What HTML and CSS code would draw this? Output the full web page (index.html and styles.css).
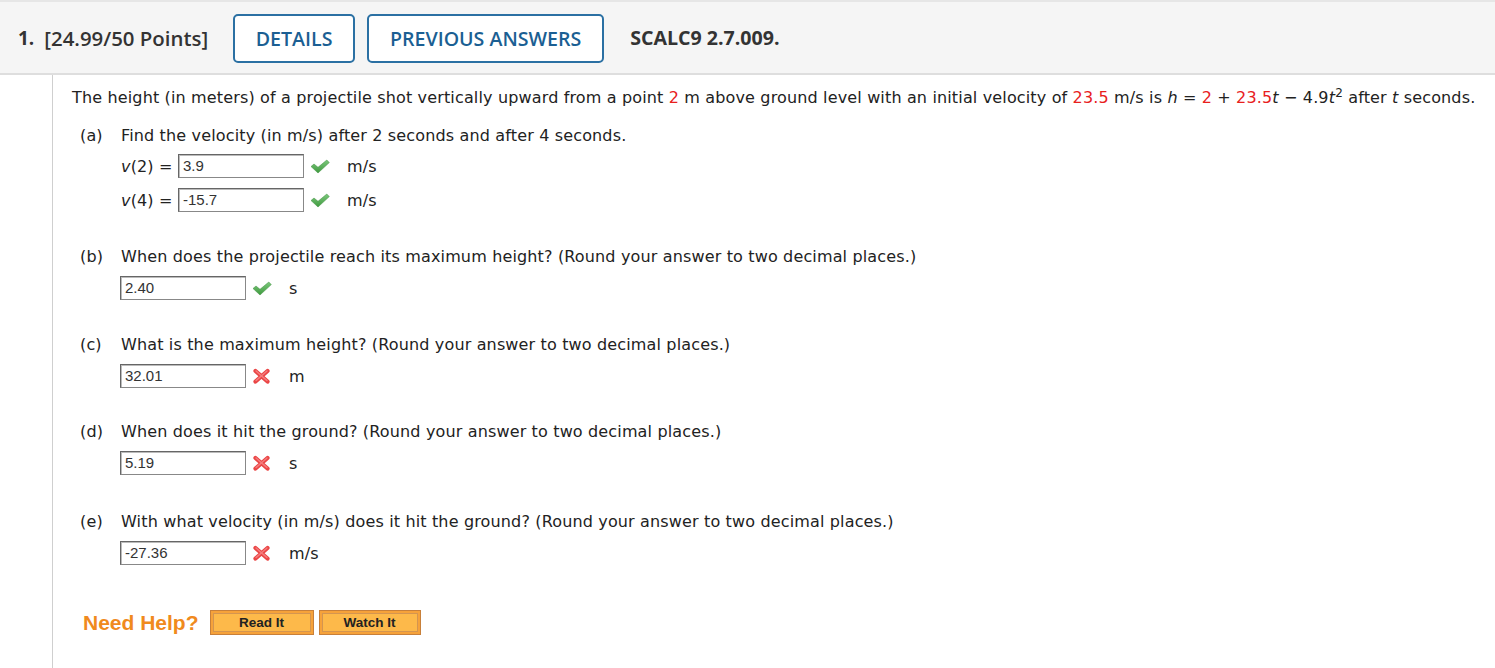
FILE: index.html
```html
<!DOCTYPE html>
<html>
<head>
<meta charset="utf-8">
<link rel="stylesheet" href="styles.css">
</head>
<body>
<div class="header">
  <span class="qnum">1.</span>
  <span class="points">[24.99/50 Points]</span>
  <button class="hbtn btn-details">DETAILS</button>
  <button class="hbtn btn-prev">PREVIOUS ANSWERS</button>
  <span class="code">SCALC9 2.7.009.</span>
</div>
<div class="content">
  <p class="intro">The height (in meters) of a projectile shot vertically upward from a point <span class="red">2</span> m above ground level with an initial velocity of <span class="red">23.5</span> m/s is <i>h</i> = <span class="red">2</span> + <span class="red">23.5</span><i>t</i> &minus; 4.9<i>t</i><sup>2</sup> after <i>t</i> seconds.</p>

  <div class="part part-a">
    <div class="qline"><span class="lbl">(a)</span><span>Find the velocity (in m/s) after 2 seconds and after 4 seconds.</span></div>
    <div class="arow first"><span class="vlbl"><i>v</i>(2) =</span><span class="ans">3.9</span><span class="icon"><svg viewBox="0 0 20 16" width="20" height="16"><defs><linearGradient id="g1" x1="0" y1="0" x2="0" y2="1"><stop offset="0" stop-color="#7cc87c"/><stop offset="1" stop-color="#3f9a3f"/></linearGradient></defs><path d="M1 8.5 L4 6 L8 9.3 L16.8 2 L19.3 4.6 L8 15 Z" fill="url(#g1)" stroke="#3f8f3f" stroke-width="0.5" stroke-linejoin="round"/></svg></span><span class="unit">m/s</span></div>
    <div class="arow"><span class="vlbl"><i>v</i>(4) =</span><span class="ans">-15.7</span><span class="icon"><svg viewBox="0 0 20 16" width="20" height="16"><path d="M1 8.5 L4 6 L8 9.3 L16.8 2 L19.3 4.6 L8 15 Z" fill="url(#g1)" stroke="#3f8f3f" stroke-width="0.5" stroke-linejoin="round"/></svg></span><span class="unit">m/s</span></div>
  </div>

  <div class="part part-b">
    <div class="qline"><span class="lbl">(b)</span><span>When does the projectile reach its maximum height? (Round your answer to two decimal places.)</span></div>
    <div class="arow first ind"><span class="ans">2.40</span><span class="icon"><svg viewBox="0 0 20 16" width="20" height="16"><path d="M1 8.5 L4 6 L8 9.3 L16.8 2 L19.3 4.6 L8 15 Z" fill="url(#g1)" stroke="#3f8f3f" stroke-width="0.5" stroke-linejoin="round"/></svg></span><span class="unit">s</span></div>
  </div>

  <div class="part part-c">
    <div class="qline"><span class="lbl">(c)</span><span>What is the maximum height? (Round your answer to two decimal places.)</span></div>
    <div class="arow first ind"><span class="ans">32.01</span><span class="icon"><svg viewBox="0 0 20 16" width="20" height="16"><g stroke="#ea4545" stroke-width="4.2" stroke-linecap="round"><line x1="3.5" y1="3" x2="15.5" y2="13.5"/><line x1="15.5" y1="3" x2="3.5" y2="13.5"/></g><g stroke="#f57c7c" stroke-width="1.4" stroke-linecap="round"><line x1="4" y1="3" x2="15" y2="12.6"/><line x1="15" y1="3" x2="4" y2="12.6"/></g></svg></span><span class="unit">m</span></div>
  </div>

  <div class="part">
    <div class="qline"><span class="lbl">(d)</span><span>When does it hit the ground? (Round your answer to two decimal places.)</span></div>
    <div class="arow first ind"><span class="ans">5.19</span><span class="icon"><svg viewBox="0 0 20 16" width="20" height="16"><g stroke="#ea4545" stroke-width="4.2" stroke-linecap="round"><line x1="3.5" y1="3" x2="15.5" y2="13.5"/><line x1="15.5" y1="3" x2="3.5" y2="13.5"/></g><g stroke="#f57c7c" stroke-width="1.4" stroke-linecap="round"><line x1="4" y1="3" x2="15" y2="12.6"/><line x1="15" y1="3" x2="4" y2="12.6"/></g></svg></span><span class="unit">s</span></div>
  </div>

  <div class="part part-e">
    <div class="qline"><span class="lbl">(e)</span><span>With what velocity (in m/s) does it hit the ground? (Round your answer to two decimal places.)</span></div>
    <div class="arow first ind"><span class="ans">-27.36</span><span class="icon"><svg viewBox="0 0 20 16" width="20" height="16"><g stroke="#ea4545" stroke-width="4.2" stroke-linecap="round"><line x1="3.5" y1="3" x2="15.5" y2="13.5"/><line x1="15.5" y1="3" x2="3.5" y2="13.5"/></g><g stroke="#f57c7c" stroke-width="1.4" stroke-linecap="round"><line x1="4" y1="3" x2="15" y2="12.6"/><line x1="15" y1="3" x2="4" y2="12.6"/></g></svg></span><span class="unit">m/s</span></div>
  </div>

  <div class="help">
    <span class="need">Need Help?</span>
    <span class="obtn read">Read It</span>
    <span class="obtn watch">Watch It</span>
  </div>
</div>
</body>
</html>
```
FILE: styles.css
```css
html, body {
  margin: 0;
  padding: 0;
  background: #fff;
}
body {
  font-family: "DejaVu Sans", Verdana, sans-serif;
  color: #222;
  height: 668px;
  overflow: hidden;
}
.header {
  display: flex;
  align-items: center;
  height: 71px;
  border-top: 2px solid #e6e6e6;
  border-bottom: 2px solid #dedede;
  background: #f5f5f5;
  padding-left: 18px;
  font-family: "Open Sans", sans-serif;
  color: #333;
}
.qnum {
  font-weight: 700;
  font-size: 19px;
  margin-right: 10px;
}
.points {
  font-weight: 600;
  font-size: 20.4px;
  margin-right: 25px;
}
.hbtn {
  font-family: "Open Sans", sans-serif;
  font-weight: 600;
  font-size: 19.6px;
  color: #1b5f93;
  background: #fff;
  border: 2px solid #2b70a3;
  border-radius: 5px;
  height: 49px;
  padding: 0;
  margin: 2px 12px 0 0;
}
.btn-details { width: 122px; }
.btn-prev { width: 237px; }
.code {
  margin-left: 14px;
  font-weight: 700;
  font-size: 19.6px;
  color: #333;
}
.content {
  margin-left: 52px;
  border-left: 1px solid #cfcfcf;
  padding: 12px 0 0 19px;
  font-size: 16px;
  letter-spacing: 0.15px;
  height: 600px;
}
.intro {
  margin: 0;
  line-height: 22px;
}
.intro sup {
  font-size: 12px;
  line-height: 0;
}
.red { color: #e8201d; }
.part { margin-top: 28px; }
.part-a { margin-top: 16px; }
.part-b, .part-c { margin-top: 29px; }
.part-e { margin-top: 31px; }
.qline {
  display: flex;
  line-height: 22px;
  padding-left: 8px;
}
.lbl { width: 41px; }
.arow {
  display: flex;
  align-items: center;
  height: 34px;
  padding-left: 49px;
}
.arow.first { margin-top: 3px; }
.part-a .arow.first { margin-top: 2px; }
.arow.ind { padding-left: 48px; }
.vlbl { width: 57px; }
.ans {
  box-sizing: border-box;
  width: 126px;
  height: 24px;
  border: 1px solid #888;
  border-top-color: #666;
  border-left-color: #666;
  box-shadow: inset 1px 1px 0 #bbb;
  font-family: "Liberation Sans", Arial, sans-serif;
  font-size: 15px;
  letter-spacing: 0;
  color: #333;
  padding: 2px 0 0 4px;
  line-height: 18px;
}
.icon {
  width: 20px;
  margin-left: 6px;
  display: flex;
  align-items: center;
}
.icon svg { display: block; }
.unit { margin-left: 17px; }
.help {
  display: flex;
  align-items: center;
  margin-top: 40px;
  padding-left: 11px;
}
.need {
  font-family: "Liberation Sans", Arial, sans-serif;
  font-weight: 700;
  font-size: 21px;
  letter-spacing: 0;
  color: #f08a1d;
  margin-right: 11px;
}
.obtn {
  box-sizing: border-box;
  display: inline-block;
  height: 25px;
  border: 1px solid #c8803a;
  background: #fdb94a;
  box-shadow: inset 0 0 0 2px #f6a23a, inset 0 0 0 3px #d49550;
  font-family: "Liberation Sans", Arial, sans-serif;
  font-weight: 700;
  font-size: 13.5px;
  letter-spacing: 0;
  color: #222;
  text-align: center;
  line-height: 23px;
  margin-right: 5px;
}
.read { width: 104px; }
.watch { width: 102px; }
```
